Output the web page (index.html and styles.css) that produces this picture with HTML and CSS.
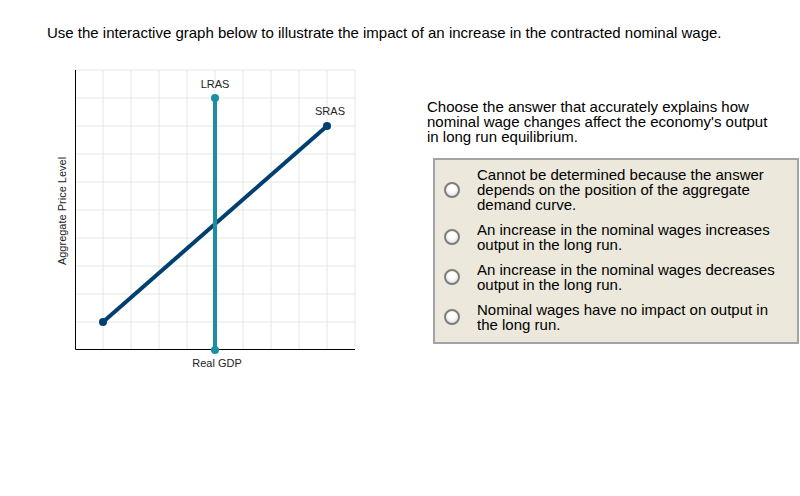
FILE: index.html
```html
<!DOCTYPE html>
<html lang="en">
<head>
  <meta charset="UTF-8" />
  <title>Aggregate Supply Question</title>
  <link rel="stylesheet" href="styles.css">
</head>
<body>

  <div class="page">
    <p class="prompt">Use the interactive graph below to illustrate the impact of an increase in the contracted nominal wage.</p>

    <div class="row">
      <!-- graph: plot area is 280x280, grid every 28px -->
      <svg class="graph" width="330" height="315" viewBox="0 0 330 315">
        <g class="grid">
          <line x1="63" y1="10" x2="63" y2="290"/>
          <line x1="91" y1="10" x2="91" y2="290"/>
          <line x1="119" y1="10" x2="119" y2="290"/>
          <line x1="147" y1="10" x2="147" y2="290"/>
          <line x1="175" y1="10" x2="175" y2="290"/>
          <line x1="203" y1="10" x2="203" y2="290"/>
          <line x1="231" y1="10" x2="231" y2="290"/>
          <line x1="259" y1="10" x2="259" y2="290"/>
          <line x1="287" y1="10" x2="287" y2="290"/>
          <line x1="315" y1="10" x2="315" y2="290"/>
          <line x1="35" y1="10" x2="315" y2="10"/>
          <line x1="35" y1="38" x2="315" y2="38"/>
          <line x1="35" y1="66" x2="315" y2="66"/>
          <line x1="35" y1="94" x2="315" y2="94"/>
          <line x1="35" y1="122" x2="315" y2="122"/>
          <line x1="35" y1="150" x2="315" y2="150"/>
          <line x1="35" y1="178" x2="315" y2="178"/>
          <line x1="35" y1="206" x2="315" y2="206"/>
          <line x1="35" y1="234" x2="315" y2="234"/>
          <line x1="35" y1="262" x2="315" y2="262"/>
        </g>
        <polyline class="axis" points="35.5,10 35.5,289.5 315,289.5"/>

        <line class="sras" x1="63" y1="262" x2="287" y2="66"/>
        <circle class="sras-dot" cx="63" cy="262" r="4"/>
        <circle class="sras-dot" cx="287" cy="66" r="4"/>

        <line class="lras" x1="175" y1="38" x2="175" y2="290"/>
        <circle class="lras-dot" cx="175" cy="38" r="4"/>
        <circle class="lras-dot" cx="175" cy="290" r="4"/>

        <text class="label" x="175" y="28" text-anchor="middle">LRAS</text>
        <text class="label" x="290" y="55" text-anchor="middle">SRAS</text>
        <text class="label" x="177" y="307" text-anchor="middle">Real GDP</text>
        <text class="label" x="26" y="151" text-anchor="middle" transform="rotate(-90 26 151)">Aggregate Price Level</text>
      </svg>

      <div class="question">
        <p class="ask">Choose the answer that accurately explains how nominal wage changes affect the economy's output in long run equilibrium.</p>

        <div class="choices">
          <label class="choice">
            <span class="radio"></span>
            <span class="choice-text">Cannot be determined because the answer depends on the position of the aggregate demand curve.</span>
          </label>
          <label class="choice">
            <span class="radio"></span>
            <span class="choice-text">An increase in the nominal wages increases output in the long run.</span>
          </label>
          <label class="choice">
            <span class="radio"></span>
            <span class="choice-text">An increase in the nominal wages decreases output in the long run.</span>
          </label>
          <label class="choice">
            <span class="radio"></span>
            <span class="choice-text">Nominal wages have no impact on output in the long run.</span>
          </label>
        </div>
      </div>
    </div>
  </div>

</body>
</html>
```

FILE: styles.css
```css
body {
  margin: 0;
  background-color: white;
  color: black;
  font-family: "Liberation Sans", Arial, sans-serif;
}

.page {
  padding-top: 25px;
}

.prompt {
  margin: 0 0 0 47px;
  font-size: 15px;
  line-height: 16px;
}

.row {
  display: flex;
  margin-top: 19px;
  padding-left: 40px;
}

.graph {
  display: block;
  flex-shrink: 0;
}

.grid line {
  stroke: #e6e6e6;
  stroke-width: 1;
}

.axis {
  fill: none;
  stroke: black;
  stroke-width: 1;
}

.sras {
  stroke: #003f70;
  stroke-width: 4;
}

.sras-dot {
  fill: #003f70;
}

.lras {
  stroke: #1a8ea6;
  stroke-width: 4;
}

.lras-dot {
  fill: #1a8ea6;
}

.label {
  font-family: "Liberation Sans", Arial, sans-serif;
  font-size: 11px;
  fill: #222;
}

.question {
  margin-left: 57px;
  padding-top: 39px;
}

.ask {
  margin: 0;
  width: 348px;
  font-size: 15px;
  line-height: 15px;
}

.choices {
  margin-top: 14px;
  margin-left: 6px;
  width: 353px;
  border: 2px solid #a3a3a3;
  background-color: #ece9dc;
  padding: 7px 0 10px 9px;
  display: flex;
  flex-direction: column;
  gap: 10px;
}

.choice {
  display: flex;
  align-items: center;
  gap: 17px;
}

.radio {
  flex-shrink: 0;
  width: 12px;
  height: 12px;
  border: 2px solid #7d7d7d;
  border-radius: 50%;
  background: radial-gradient(circle at 50% 35%, #ffffff 30%, #d9d9d9 100%);
}

.choice-text {
  font-size: 15px;
  line-height: 15px;
  width: 305px;
}
```
